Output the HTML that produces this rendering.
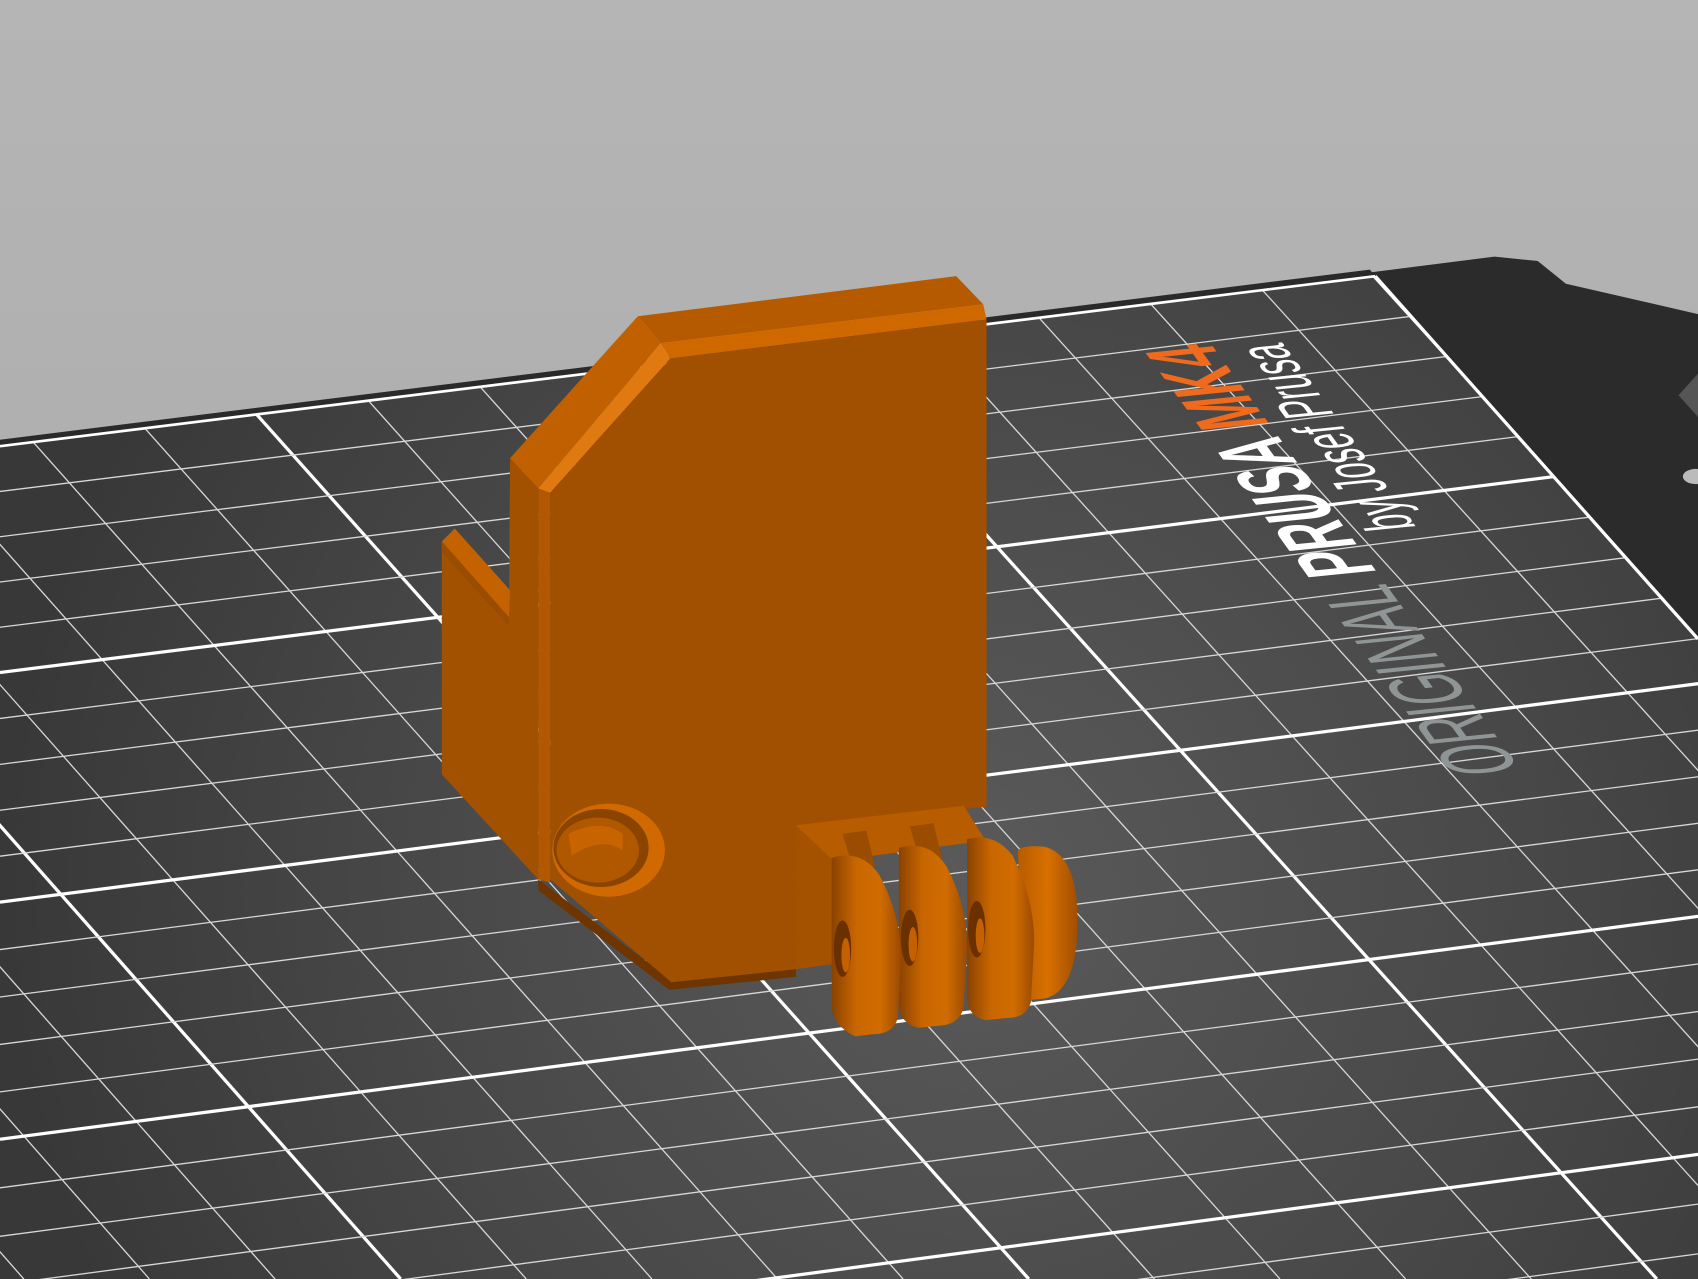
<!DOCTYPE html>
<html><head><meta charset="utf-8">
<style>
html,body{margin:0;padding:0;width:1698px;height:1279px;overflow:hidden;background:#ababab}
svg{display:block;overflow:hidden}
</style></head>
<body>
<svg id="s" width="1698" height="1279" viewBox="0 0 1568 1181" preserveAspectRatio="none" xmlns="http://www.w3.org/2000/svg">
<defs>
<linearGradient id="sky" x1="0" y1="0" x2="0" y2="1">
<stop offset="0" stop-color="#b5b5b5"/><stop offset="1" stop-color="#a6a6a6"/>
</linearGradient>
<radialGradient id="bed" cx="900" cy="820" r="900" gradientUnits="userSpaceOnUse">
<stop offset="0" stop-color="#5a5a5a"/><stop offset="0.6" stop-color="#474747"/><stop offset="1" stop-color="#383838"/>
</radialGradient>
<clipPath id="bc"><polygon points="0,412 1270,255 2094,1181 0,1181"/></clipPath>
<linearGradient id="fin" x1="0" y1="0" x2="1" y2="0">
<stop offset="0" stop-color="#8a4200"/><stop offset="0.35" stop-color="#c86600"/><stop offset="0.7" stop-color="#d06c00"/><stop offset="1" stop-color="#9a4a00"/>
</linearGradient>
<linearGradient id="nut" x1="0" y1="0" x2="1" y2="0">
<stop offset="0" stop-color="#b85c00"/><stop offset="0.5" stop-color="#d87000"/><stop offset="1" stop-color="#a04e00"/>
</linearGradient>
</defs>
<rect width="1568" height="1181" fill="url(#sky)"/>
<polygon points="1262,252 1380,237 1420,241 1446,262 1568,290 1568,600 1270,262" fill="#2b2b2b"/>
<polygon points="1568,345 1550,365 1568,385" fill="#555"/>
<ellipse cx="1566" cy="440" rx="12" ry="7" fill="#bbb"/>
<polygon points="0,406 1265,249 1270,255 0,414" fill="#2a2a2a"/>
<polygon points="0,412 1270,255 2094,1181 0,1181" fill="url(#bed)"/>
<g id="grid" clip-path="url(#bc)"></g>
<line x1="0" y1="412" x2="1270" y2="255" stroke="#fff" stroke-width="2.5"/>
<line x1="1270" y1="255" x2="1568" y2="590" stroke="#fff" stroke-width="3"/>
<g transform="matrix(-0.294,-0.4045,1,-0.1,1405,712)" font-family="Liberation Sans, sans-serif">
<text x="0" y="0" font-size="90"><tspan fill="#8f9595">ORIGINAL </tspan><tspan fill="#fff" font-weight="bold">PRUSA </tspan><tspan fill="#f06a1e" font-weight="bold">MK4</tspan></text>
<text x="540" y="62" font-size="64" fill="#fff">by Josef Prusa</text>
</g>
<polygon points="408,500 470,570 471,423 497,451 497,812 408,715" fill="#a25100"/>
<polygon points="408,500 420,488 471,545 470,570" fill="#c46200"/>
<polygon points="408,500 470,570 470,578 408,510" fill="#9a4c00"/>
<polygon points="497,812 620,905 735,893 735,902 618,914 497,822" fill="#6e3500"/>
<polygon points="508,455 619,331 911,295 911,745 735,762 735,895 620,907 508,812" fill="#a05000"/>
<polygon points="497,451 508,455 508,815 497,812" fill="#b25800"/>
<polygon points="589,292 883,255 908,281 610,317" fill="#b65a00"/>
<polygon points="610,317 908,281 911,295 619,331" fill="#d06800"/>
<polygon points="589,292 610,317 497,451 471,423" fill="#c06000"/>
<polygon points="610,317 619,331 508,455 497,451" fill="#e07a10"/>
<ellipse cx="562" cy="785" rx="52" ry="43" fill="#d06a00"/>
<ellipse cx="555" cy="783" rx="44" ry="36" fill="#8a4400"/>
<ellipse cx="552" cy="785" rx="38" ry="30" fill="#b05800"/>
<path d="M525,770 Q555,755 575,770 L575,785 Q555,772 528,790 Z" fill="#c86400"/>
<polygon points="735,762 890,744 910,776 770,795 770,890 735,895" fill="#a55200"/>
<polygon points="735,762 890,744 910,776 770,795" fill="#b85c00"/>
<polygon points="778,770 800,767 808,800 788,803" fill="#9a4c00"/>
<polygon points="840,763 862,760 870,793 850,796" fill="#9a4c00"/>
<path d="M940,785 Q945,780 965,782 Q995,790 995,850 Q995,915 965,922 L945,924 Z" fill="url(#nut)"/>
<path d="M893,775 Q918,768 935,790 Q955,830 955,870 L952,925 Q948,940 930,940 L910,942 Q893,938 893,920 Z" fill="url(#fin)"/>
<path d="M830,783 Q858,775 874,800 Q893,835 893,875 L890,930 Q886,946 868,947 L848,949 Q830,945 830,925 Z" fill="url(#fin)"/>
<path d="M768,792 Q796,784 812,808 Q832,845 832,885 L829,940 Q825,955 806,955 L790,957 Q770,948 768,930 Z" fill="url(#fin)"/>
<ellipse cx="778" cy="876" rx="8" ry="26" fill="#6a3000"/>
<ellipse cx="840" cy="866" rx="8" ry="26" fill="#6a3000"/>
<ellipse cx="902" cy="858" rx="8" ry="26" fill="#6a3000"/>
<ellipse cx="781" cy="882" rx="4" ry="16" fill="#c46000"/>
<ellipse cx="843" cy="872" rx="4" ry="16" fill="#c46000"/>
<ellipse cx="905" cy="864" rx="4" ry="16" fill="#c46000"/>
</svg>
<script>
(function(){
var g=document.getElementById('grid'),h='';
function ln(x1,y1,x2,y2,maj){h+='<line x1="'+x1.toFixed(1)+'" y1="'+y1.toFixed(1)+'" x2="'+x2.toFixed(1)+'" y2="'+y2.toFixed(1)+'" stroke="'+(maj?'#ffffff':'#d8d8d8')+'" stroke-width="'+(maj?3:1.2)+'"/>';}
for(var k=-10;k<=15;k++){
 var u=-279+k*103.2, fy=412-0.1236*u, bx=370+1.124*(u+279);
 ln(u,fy,bx,1181,k%5==0);
}
var majs=[412,621,833,1052,1276,1510,1750];
for(var j=0;j<majs.length-1;j++){
 for(var m=0;m<5;m++){
  if(j==0&&m==0)continue;
  var y0=majs[j]+(majs[j+1]-majs[j])*m/5;
  var s=-0.1236-(y0-412)*0.000012;
  ln(0,y0,2200,y0+s*2200,m==0);
 }
}
g.innerHTML=h;
})();
</script>
</body></html>
